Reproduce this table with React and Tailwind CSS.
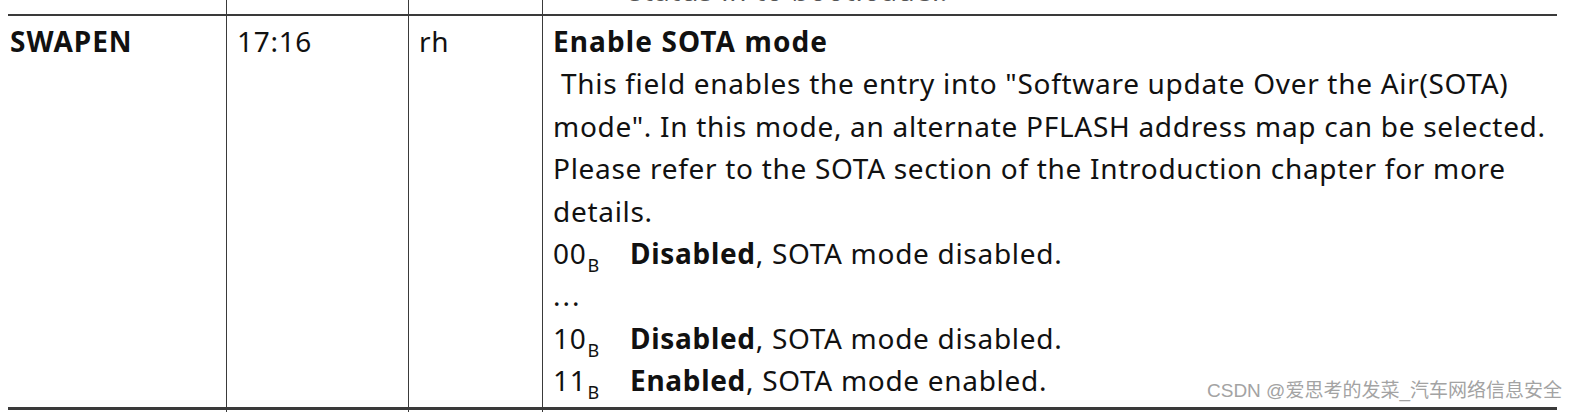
import React from "react";

const font = { fontFamily: '"Noto Sans", "Open Sans", sans-serif' };

const Sub = ({ children }) => (
  <span className="text-[18px] leading-none relative top-[8px] ml-[1px] tracking-normal">
    {children}
  </span>
);

const ValueRow = ({ code, label, text }) => (
  <div className="flex">
    <div className="w-[77px] shrink-0">
      {code}
      <Sub>B</Sub>
    </div>
    <div>
      <span className="font-bold">{label}</span>, {text}
    </div>
  </div>
);

export default function App() {
  return (
    <div
      className="relative w-[1583px] h-[412px] bg-white overflow-hidden text-[#111] text-[28px] tracking-[0.7px] leading-[42.4px]"
      style={font}
    >
      {/* tail of the previous row */}
      <div className="ml-2 w-[1549px] grid grid-cols-[219px_182px_134px_1014px] h-[14px]">
        <div className="border-r border-[#3a3a3a]" />
        <div className="border-r border-[#3a3a3a]" />
        <div className="border-r border-[#3a3a3a]" />
        <div className="overflow-hidden">
          <div className="ml-[86px] -mt-[31px] text-[#555] whitespace-nowrap">
            status in to bootloader.
          </div>
        </div>
      </div>

      {/* SWAPEN row */}
      <div className="ml-2 w-[1549px] grid grid-cols-[219px_182px_134px_1014px] border-t-2 border-b-[3px] border-[#3a3a3a]">
        <div className="border-r border-[#3a3a3a] pl-[2px] pt-1 pb-[5px] font-bold tracking-[1px]">
          SWAPEN
        </div>
        <div className="border-r border-[#3a3a3a] pl-[10px] pt-1">17:16</div>
        <div className="border-r border-[#3a3a3a] pl-[10px] pt-1">rh</div>
        <div className="pl-[10px] pt-1 pb-[5px]">
          <div className="font-bold tracking-[1.1px]">Enable SOTA mode</div>
          <div className="whitespace-pre">
            {' This field enables the entry into "Software update Over the Air(SOTA)'}
          </div>
          <div className="whitespace-nowrap">
            mode". In this mode, an alternate PFLASH address map can be selected.
          </div>
          <div className="whitespace-nowrap">
            Please refer to the SOTA section of the Introduction chapter for more
          </div>
          <div>details.</div>
          <ValueRow code="00" label="Disabled" text="SOTA mode disabled." />
          <div className="tracking-[2px]">...</div>
          <ValueRow code="10" label="Disabled" text="SOTA mode disabled." />
          <ValueRow code="11" label="Enabled" text="SOTA mode enabled." />
        </div>
      </div>

      {/* start of the next row */}
      <div className="ml-2 w-[1549px] grid grid-cols-[219px_182px_134px_1014px] h-[10px]">
        <div className="border-r border-[#3a3a3a]" />
        <div className="border-r border-[#3a3a3a]" />
        <div className="border-r border-[#3a3a3a]" />
        <div />
      </div>

      {/* watermark */}
      <div
        className="absolute left-[1207px] top-[380px] text-[19px] leading-[22px] tracking-normal text-[#a3a3a3] whitespace-nowrap"
        style={{ fontFamily: '"Liberation Sans", "Noto Sans CJK SC", sans-serif' }}
      >
        CSDN @爱思考的发菜_汽车网络信息安全
      </div>
    </div>
  );
}
